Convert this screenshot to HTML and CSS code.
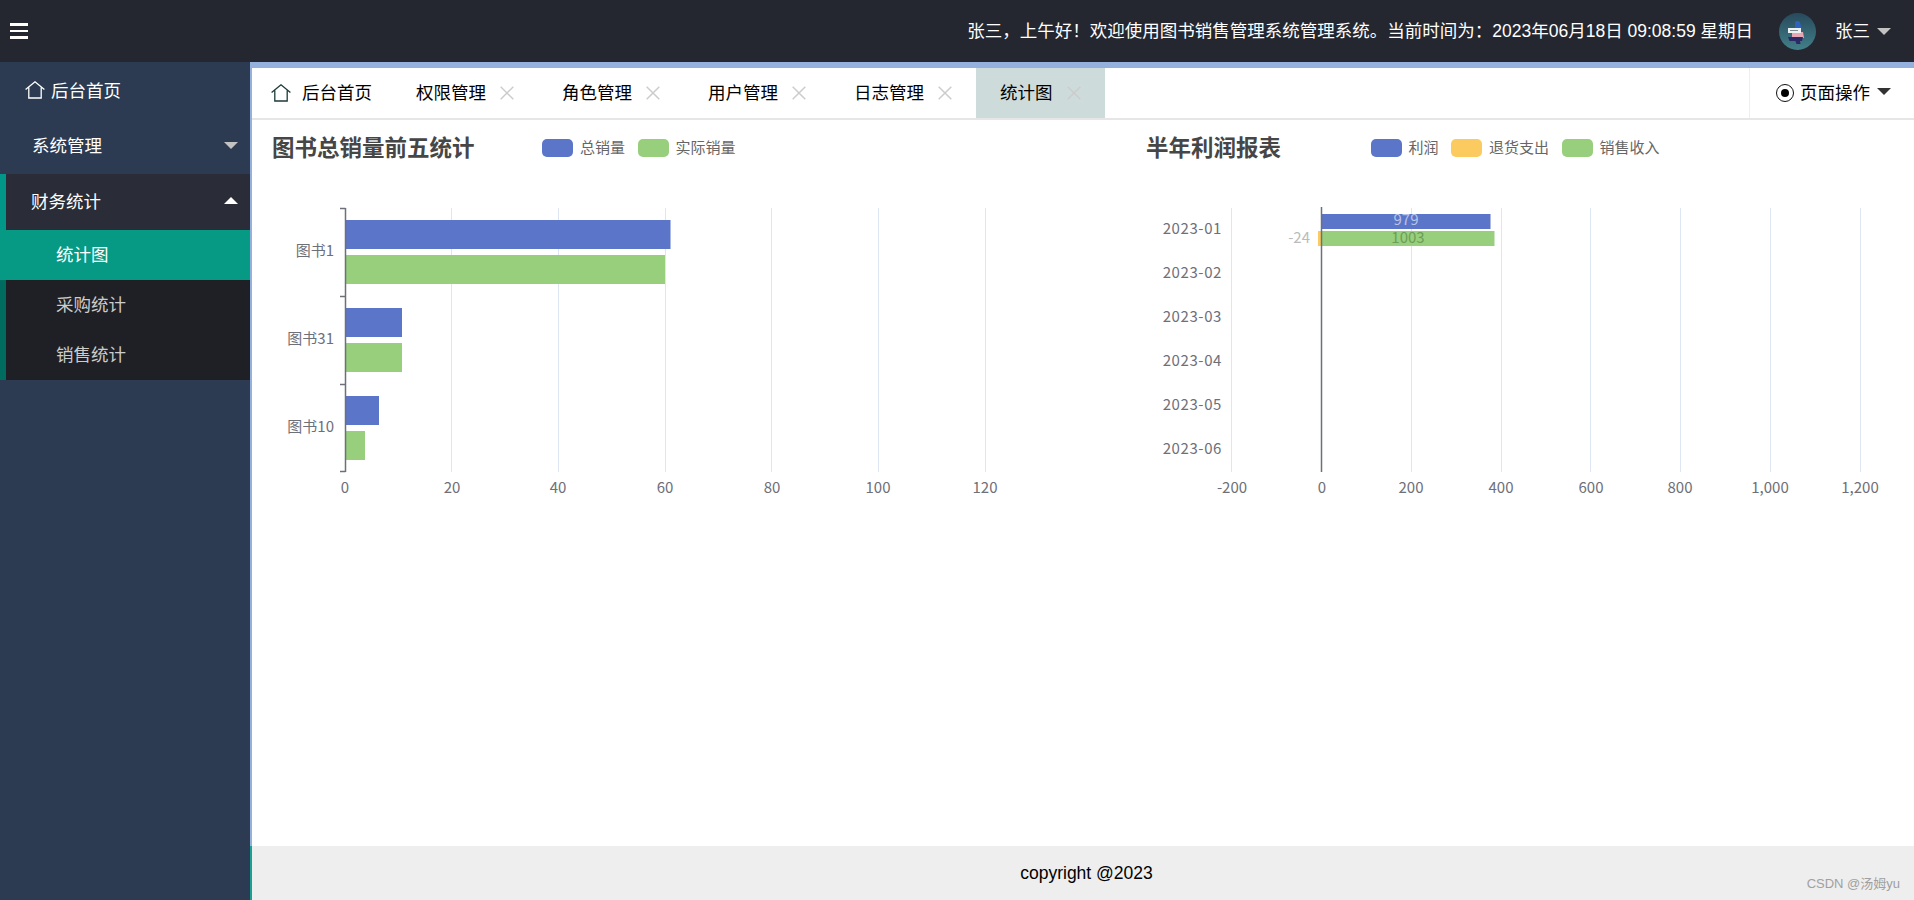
FILE: index.html
```html
<!DOCTYPE html>
<html lang="zh-CN">
<head>
<meta charset="utf-8">
<title>图书销售管理系统</title>
<link rel="stylesheet" href="styles.css">
</head>
<body>
<svg class="defs" width="0" height="0" aria-hidden="true">
  <symbol id="home" viewBox="0 0 20 18"><path d="M.6 8.6 10 .8l9.400 7.800M3.800 6.600V17h12.400V6.600" fill="none" stroke="currentColor" stroke-width="1.300"/></symbol>
  <symbol id="close" viewBox="0 0 14 14"><path d="M.7.7l12.600 12.600M13.300.7.700 13.300" fill="none" stroke="currentColor" stroke-width="1.500"/></symbol>
</svg>
<div class="app">
  <header class="topbar">
    <div class="burger"><span></span><span></span><span></span></div>
    <div class="greeting">张三，上午好！欢迎使用图书销售管理系统管理系统。当前时间为：2023年06月18日 09:08:59 星期日</div>
    <svg class="avatar" viewBox="0 0 37 37">
      <defs><linearGradient id="av" x1="0" y1="0" x2="0" y2="1"><stop offset="0" stop-color="#27495c"/><stop offset="1" stop-color="#42808a"/></linearGradient></defs>
      <circle cx="18.500" cy="18.500" r="18.500" fill="url(#av)"/>
      <path d="M16 9c2-2 5-1 5 1l2 6h-7z" fill="#2f62c0"/>
      <path d="M13 19h11l1 6H13z" fill="#e9a7b4"/>
      <path d="M9 24h15l-1 4h-2l.5 3h-4l-1-3h-6z" fill="#2b2a66"/>
      <rect x="9" y="15" width="13" height="5" fill="#eef1f1"/>
      <rect x="11" y="17" width="8" height="1" fill="#7d8a90"/>
    </svg>
    <div class="user">张三</div>
    <span class="caret caret-grey"></span>
  </header>
  <div class="body">
    <aside class="side">
      <a class="side-home"><svg class="ico-home"><use href="#home"/></svg>后台首页</a>
      <a class="side-group">系统管理<span class="caret caret-grey"></span></a>
      <a class="side-group open">财务统计<span class="caret caret-up"></span></a>
      <a class="side-sub active">统计图</a>
      <a class="side-sub">采购统计</a>
      <a class="side-sub">销售统计</a>
    </aside>
    <main class="main">
      <div class="content">
        <nav class="tabs">
          <a class="tab tab-home"><svg class="ico-home"><use href="#home"/></svg>后台首页</a>
          <a class="tab">权限管理<svg class="ico-x"><use href="#close"/></svg></a>
          <a class="tab">角色管理<svg class="ico-x"><use href="#close"/></svg></a>
          <a class="tab">用户管理<svg class="ico-x"><use href="#close"/></svg></a>
          <a class="tab">日志管理<svg class="ico-x"><use href="#close"/></svg></a>
          <a class="tab current">统计图<svg class="ico-x"><use href="#close"/></svg></a>
          <a class="page-ops"><span class="radio"></span>页面操作<span class="caret caret-dark"></span></a>
        </nav>
        <section class="charts">
          <div class="panel panel-a">
            <div class="panel-head">
              <h2 class="title title-a">图书总销量前五统计</h2>
              <div class="legend"><i class="sw blue"></i>总销量</div>
              <div class="legend"><i class="sw green"></i>实际销量</div>
            </div>
            <svg class="chart" width="874" height="320" viewBox="252 176 874 320">
              <g class="grid">
                <path d="M451.500 208V472M558.500 208V472M665.500 208V472M771.500 208V472M878.500 208V472M985.500 208V472"/>
              </g>
              <rect class="f-blue" x="346" y="220" width="324.500" height="29"/>
              <rect class="f-green" x="346" y="255" width="319" height="29"/>
              <rect class="f-blue" x="346" y="308" width="56" height="29"/>
              <rect class="f-green" x="346" y="343" width="56" height="29"/>
              <rect class="f-blue" x="346" y="396" width="33" height="29"/>
              <rect class="f-green" x="346" y="431" width="19" height="29"/>
              <path class="axis" d="M345.500 208V472M340 208.500H345.500M340 296.500H345.500M340 384.500H345.500M340 471.500H345.500"/>
              <g class="lab end">
                <text x="334" y="252">图书1</text>
                <text x="334" y="340">图书31</text>
                <text x="334" y="428">图书10</text>
              </g>
              <g class="lab mid">
                <text x="345" y="489">0</text>
                <text x="452" y="489">20</text>
                <text x="558" y="489">40</text>
                <text x="665" y="489">60</text>
                <text x="772" y="489">80</text>
                <text x="878" y="489">100</text>
                <text x="985" y="489">120</text>
              </g>
            </svg>
          </div>
          <div class="panel panel-b">
            <div class="panel-head">
              <h2 class="title title-b">半年利润报表</h2>
              <div class="legend"><i class="sw blue"></i>利润</div>
              <div class="legend"><i class="sw orange"></i>退货支出</div>
              <div class="legend"><i class="sw green"></i>销售收入</div>
            </div>
            <svg class="chart" width="788" height="320" viewBox="1126 176 788 320">
              <g class="grid">
                <path d="M1231.500 208V472M1411.500 208V472M1501.500 208V472M1590.500 208V472M1680.500 208V472M1770.500 208V472M1860.500 208V472"/>
              </g>
              <rect class="f-blue" x="1322" y="214" width="168.500" height="15"/>
              <rect class="f-orange" x="1318" y="231" width="4" height="15"/>
              <rect class="f-green" x="1322" y="231" width="172.500" height="15"/>
              <path class="axis" d="M1321.500 207V472"/>
              <text class="val val-blue" x="1406" y="221">979</text>
              <text class="val val-orange" x="1310" y="239">-24</text>
              <text class="val val-green" x="1408" y="239">1003</text>
              <g class="lab end dates">
                <text x="1222" y="230">2023-01</text>
                <text x="1222" y="274">2023-02</text>
                <text x="1222" y="318">2023-03</text>
                <text x="1222" y="362">2023-04</text>
                <text x="1222" y="406">2023-05</text>
                <text x="1222" y="450">2023-06</text>
              </g>
              <g class="lab mid">
                <text x="1232" y="489">-200</text>
                <text x="1322" y="489">0</text>
                <text x="1411" y="489">200</text>
                <text x="1501" y="489">400</text>
                <text x="1591" y="489">600</text>
                <text x="1680" y="489">800</text>
                <text x="1770" y="489">1,000</text>
                <text x="1860" y="489">1,200</text>
              </g>
            </svg>
          </div>
        </section>
      </div>
      <footer class="foot">copyright @2023<span class="mark">CSDN @汤姆yu</span></footer>
    </main>
  </div>
</div>
</body>
</html>
```

FILE: styles.css
```css
* { box-sizing: border-box; }
html, body { margin: 0; height: 100%; overflow: hidden; }
body { font-family: "Liberation Sans", "Noto Sans CJK SC", sans-serif; font-size: 17.500px; color: #000; background: #fff; }
.defs { position: absolute; }
.app { height: 100vh; display: flex; flex-direction: column; }

.topbar { height: 62px; flex: none; background: #242730; color: #fff; display: flex; align-items: center; padding: 0 23px 0 10px; }
.burger { width: 18px; display: flex; flex-direction: column; gap: 4px; margin-right: auto; }
.burger span { height: 2.500px; background: #fff; }
.greeting { white-space: nowrap; padding-bottom: 4px; }
.avatar { width: 37px; height: 37px; margin-left: 26px; }
.user { margin-left: 19px; margin-right: 7px; padding-bottom: 4px; }

.caret { display: inline-block; width: 0; height: 0; border-style: solid; border-color: transparent; }
.caret-grey { border-width: 7px 7px 0; border-top-color: #c2c2c2; }
.caret-up { border-width: 0 7px 7px; border-bottom-color: #fff; }
.caret-dark { border-width: 7px 7px 0; border-top-color: #333; }

.body { flex: 1; min-height: 0; display: flex; }
.side { width: 250px; flex: none; background: #2c3a52; color: #fff; display: flex; flex-direction: column; }
.ico-home { width: 20px; height: 18px; flex: none; }
.side-home { height: 58px; display: flex; align-items: center; gap: 6px; padding: 0 0 3px 25px; }
.side-group { height: 54px; display: flex; align-items: center; justify-content: space-between; padding: 0 12px 6px 32px; }
.side-group .caret-grey { margin-top: 2px; }
.side-group.open { height: 56px; padding: 0 12px 3px 25px; border-left: 6px solid #009688; background: #2a2d38; }
.side-sub { height: 50px; display: flex; align-items: center; padding: 0 0 4px 50px; border-left: 6px solid #006b5f; background: #1e2026; color: #ccc; }
.side-sub.active { padding-left: 56px; border-left: 0; background: #069a85; color: #fff; }

.main { flex: 1; min-width: 0; display: flex; flex-direction: column; }
.content { flex: 1; min-height: 0; border-left: 2px solid #94b0dc; border-top: 6px solid #94b0dc; }
.tabs { height: 52px; display: flex; border-bottom: 2px solid #e6e6e6; }
.tab { display: flex; align-items: center; gap: 14px; padding: 0 24px 3px; height: 50px; white-space: nowrap; }
.tab-home { gap: 11px; padding: 0 20px 3px 19px; }
.tab.current { background: #cddcdb; }
.ico-x { width: 14px; height: 14px; color: #ccc; margin-top: 3px; }
.tab-home .ico-home { color: #1d3a3a; margin-top: 2px; }
.page-ops { margin-left: auto; width: 165px; height: 50px; border-left: 1px solid #eee; display: flex; align-items: center; padding: 0 0 3px 26px; }
.radio { width: 18px; height: 18px; border: 1.500px solid #111; border-radius: 50%; margin: 3px 6px 0 0; display: flex; align-items: center; justify-content: center; }
.radio::after { content: ""; width: 8px; height: 8px; background: #000; border-radius: 50%; }
.page-ops .caret { margin: 0 0 0 7px; }

.charts { display: flex; }
.panel { flex: none; }
.panel-a { width: 874px; }
.panel-b { width: 788px; }
.panel-head { height: 56px; display: flex; align-items: center; gap: 12.500px; padding-left: 20px; }
.title { margin: 0; padding-bottom: 4px; font-size: 22.500px; font-weight: 700; color: #464646; font-family: "Noto Sans CJK SC", sans-serif; white-space: nowrap; }
.title-a { margin-right: 55px; }
.title-b { margin-right: 77px; }
.legend { display: flex; align-items: center; gap: 7px; padding-bottom: 3px; font-size: 15px; color: #666; font-family: "Noto Sans CJK SC", sans-serif; }
.sw { width: 31px; height: 18px; border-radius: 5px; margin-top: 3px; }
.blue { background: #5b75c8; }
.green { background: #97cf7c; }
.orange { background: #fccb60; }
.chart { display: block; }
.grid path { stroke: #dfe6f3; stroke-width: 1; fill: none; }
.axis { stroke: #6e7079; stroke-width: 1.500; fill: none; }
.f-blue { fill: #5b75c8; }
.f-green { fill: #97cf7c; }
.f-orange { fill: #fccb60; }
.lab text, .val { font-family: "Noto Sans CJK SC", sans-serif; font-size: 15px; fill: #6e7079; dominant-baseline: middle; }
.end text { text-anchor: end; }
.mid text { text-anchor: middle; }
.dates text { letter-spacing: .6px; }
.val { text-anchor: middle; }
.val-blue { fill: #b7c3e8; }
.val-green { fill: #6c9e58; }
.val-orange { fill: #bbb; text-anchor: end; }

.foot { height: 54px; flex: none; position: relative; background: #eee; border-left: 2px solid #1aa094; display: flex; align-items: center; justify-content: center; padding-left: 7px; }
.mark { position: absolute; right: 14px; bottom: 8px; font-size: 13px; color: #a0a0a0; }
```
